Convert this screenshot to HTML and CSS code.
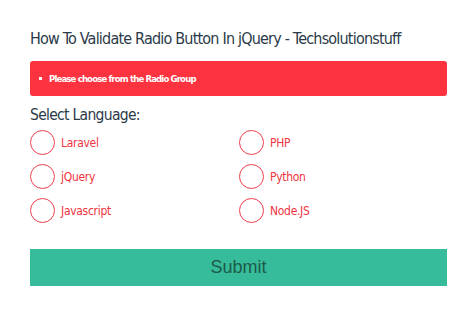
FILE: index.html
```html
<!DOCTYPE html>
<html>
<head>
<meta charset="utf-8">
<link rel="stylesheet" href="styles.css">
</head>
<body>
<div class="page">
  <h1 class="title">How To Validate Radio Button In jQuery - Techsolutionstuff</h1>
  <div class="alert">
    <ul class="alert-list"><li>Please choose from the Radio Group</li></ul>
  </div>
  <div class="label">Select Language:</div>
  <div class="options">
    <div class="option"><span class="radio"></span><span class="opt-text">Laravel</span></div>
    <div class="option"><span class="radio"></span><span class="opt-text">PHP</span></div>
    <div class="option"><span class="radio"></span><span class="opt-text">jQuery</span></div>
    <div class="option"><span class="radio"></span><span class="opt-text">Python</span></div>
    <div class="option"><span class="radio"></span><span class="opt-text">Javascript</span></div>
    <div class="option"><span class="radio"></span><span class="opt-text">Node.JS</span></div>
  </div>
  <button class="submit">Submit</button>
</div>
</body>
</html>
```
FILE: styles.css
```css
html, body {
  margin: 0;
  padding: 0;
  background: #ffffff;
}
.page {
  width: 417px;
  padding: 29px 0 0 30px;
  font-family: "DejaVu Sans Condensed", Roboto, sans-serif;
}
.title {
  margin: 0;
  font-size: 16px;
  font-weight: 500;
  line-height: 20px;
  color: #2b3a48;
  white-space: nowrap;
  letter-spacing: -0.8px;
}
.alert {
  margin-top: 12px;
  height: 35px;
  box-sizing: border-box;
  background: #fd3340;
  border-radius: 3px;
  display: flex;
  align-items: center;
  padding-left: 9px;
}
.alert-list {
  margin: 0;
  padding: 0;
  list-style: none;
}
.alert-list li {
  display: flex;
  align-items: center;
  gap: 7px;
  color: #ffffff;
  font-weight: 700;
  font-size: 9.5px;
  letter-spacing: -0.85px;
}
.alert-list li::before {
  content: "";
  width: 3px;
  height: 3px;
  background: #ffffff;
}
.label {
  margin-top: 10px;
  font-size: 15.5px;
  line-height: 18px;
  color: #2b3a48;
  letter-spacing: -0.7px;
}
.options {
  margin-top: 6px;
  display: grid;
  grid-template-columns: 209px 1fr;
  row-gap: 9px;
}
.option {
  display: flex;
  align-items: center;
  gap: 6px;
  height: 25px;
}
.radio {
  width: 25px;
  height: 25px;
  box-sizing: border-box;
  border: 1.5px solid #ef3f4e;
  border-radius: 50%;
}
.opt-text {
  color: #ef3441;
  font-size: 12px;
  letter-spacing: -0.3px;
}
.submit {
  display: block;
  margin-top: 26px;
  width: 417px;
  height: 37px;
  border: none;
  background: #37bc9b;
  color: #1c5b48;
  font-family: "Liberation Sans", Arial, sans-serif;
  font-size: 18px;
  padding: 0;
}
```
